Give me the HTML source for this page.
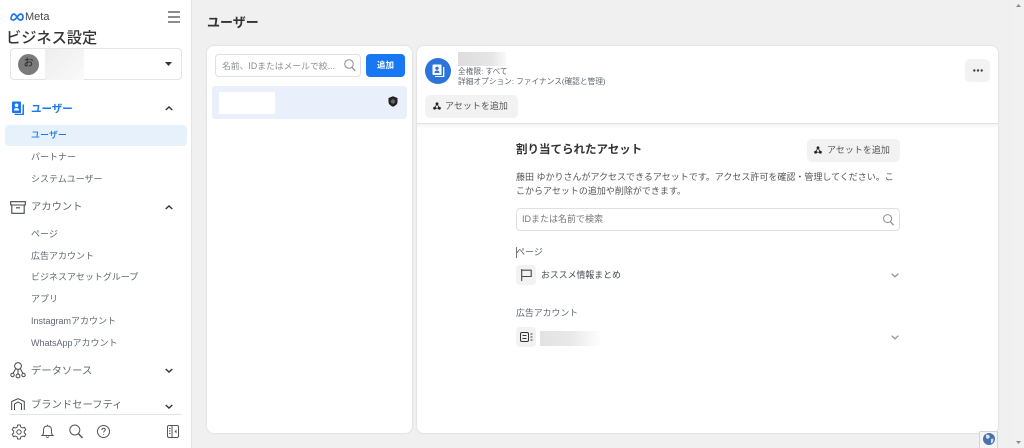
<!DOCTYPE html>
<html lang="ja"><head><meta charset="utf-8"><title>ビジネス設定</title>
<style>
*{box-sizing:border-box}
html,body{margin:0;padding:0}
body{width:1024px;height:448px;overflow:hidden;position:relative;background:#f0f0f0;font-family:"Liberation Sans","Noto Sans CJK JP",sans-serif;color:#444950;filter:blur(.3px)}
.a{position:absolute;white-space:nowrap}
svg{position:absolute;overflow:visible}
.sub{position:absolute;left:31px;font-size:9px;line-height:14px;color:#606770;white-space:nowrap}
.main{position:absolute;left:31px;font-size:10.300px;line-height:16px;color:#606770;white-space:nowrap}
.card{position:absolute;background:#fff;border-radius:7px;box-shadow:0 0 2px rgba(0,0,0,.14)}
.btn{position:absolute;background:#f2f2f2;border-radius:5px}
</style></head><body>

<!-- sidebar -->
<div class="a" style="left:0;top:0;width:192px;height:448px;background:#fff;border-right:1px solid #e4e4e4"></div>
<svg style="left:10px;top:13px" width="14" height="8" viewBox="0 0 14 8"><path d="M1 6C1 3 2.500 1 4 1c2.200 0 3.500 6 6 6 2 0 3-1.200 3-3 0-1.800-1-3-2.500-3C8.300 1 6 7 3.500 7 2 7 1 6.500 1 5.200" fill="none" stroke="#1877f2" stroke-width="1.700"/></svg>
<div class="a" style="left:25px;top:10px;font-size:11px;line-height:15px;color:#444950">Meta</div>
<svg style="left:168px;top:11px" width="12" height="12" viewBox="0 0 12 12"><path d="M0 1h12M0 6h12M0 11h12" stroke="#444950" stroke-width="1.300" fill="none"/></svg>
<div class="a" style="left:6px;top:29px;font-size:15.200px;line-height:20px;color:#333;font-weight:500">ビジネス設定</div>

<div class="a" style="left:10px;top:48px;width:172px;height:32px;border:1.500px solid #e4e4e4;border-radius:4px;background:#fff"></div>
<div class="a" style="left:18px;top:54px;width:21px;height:21px;border-radius:50%;background:#7b7b7b;color:#222;font-size:10px;line-height:20px;text-align:center">お</div>
<div class="a" style="left:45px;top:49px;width:39px;height:31px;background:linear-gradient(135deg,#eee,#f6f6f6 70%,#fafafa)"></div>
<svg style="left:165px;top:62px" width="8" height="5" viewBox="0 0 8 5"><path d="M0 0h7L3.500 4z" fill="#333"/></svg>

<svg style="left:11px;top:101px" width="14" height="15" viewBox="0 0 14 15"><path d="M1 1.500Q1 .5 2 .5h7q1 0 1 1V12H2q-1 0-1-1z" fill="#1877f2"/><path d="M11.500 3.500h1.500V14H3.500v-1.200h8z" fill="#1877f2"/><circle cx="5.500" cy="4.300" r="1.800" fill="#fff"/><path d="M3 9.500q0-2.500 2.500-2.500T8 9.500z" fill="#fff"/></svg>
<div class="a" style="left:31px;top:101px;font-size:10.500px;line-height:16px;color:#1877f2;font-weight:700">ユーザー</div>
<svg style="left:165px;top:106px" width="8" height="5" viewBox="0 0 8 5"><path d="M.7 4L4 1l3.300 3" fill="none" stroke="#333" stroke-width="1.400"/></svg>
<div class="a" style="left:5px;top:125px;width:182px;height:21px;background:#e7f1fc;border-radius:4px"></div>
<div class="sub" style="top:128px;color:#1877f2;font-weight:500">ユーザー</div>
<div class="sub" style="top:150px">パートナー</div>
<div class="sub" style="top:172px">システムユーザー</div>

<svg style="left:10px;top:201px" width="16" height="13" viewBox="0 0 16 13"><path d="M.7.7h14.600v3.300H.7zM1.800 4v8.300h12.400V4M6 6.800h4" fill="none" stroke="#444950" stroke-width="1.100"/></svg>
<div class="main" style="top:200px">アカウント</div>
<svg style="left:165px;top:205px" width="8" height="5" viewBox="0 0 8 5"><path d="M.7 4L4 1l3.300 3" fill="none" stroke="#333" stroke-width="1.400"/></svg>
<div class="sub" style="top:227px">ページ</div>
<div class="sub" style="top:249px">広告アカウント</div>
<div class="sub" style="top:270px">ビジネスアセットグループ</div>
<div class="sub" style="top:292px">アプリ</div>
<div class="sub" style="top:314px">Instagramアカウント</div>
<div class="sub" style="top:336px">WhatsAppアカウント</div>

<svg style="left:10px;top:362px" width="16" height="17" viewBox="0 0 16 17" fill="none" stroke="#444950" stroke-width="1"><circle cx="8" cy="4" r="3.400"/><path d="M5.500 7L3 11.500M10.500 7L13 11.500M8 7.500V12"/><circle cx="2.500" cy="13" r="1.700"/><circle cx="8" cy="14" r="1.900"/><circle cx="13.500" cy="13" r="1.700"/></svg>
<div class="main" style="top:364px">データソース</div>
<svg style="left:165px;top:368px" width="8" height="5" viewBox="0 0 8 5"><path d="M.7 1L4 4l3.300-3" fill="none" stroke="#333" stroke-width="1.400"/></svg>
<svg style="left:11px;top:398px" width="14" height="12" viewBox="0 0 14 12" fill="none" stroke="#444950" stroke-width="1"><path d="M.7 12V3.500L7 .7l6.300 2.800V12M3.500 12V6L7 4l3.500 2v6"/></svg>
<div class="main" style="top:398px">ブランドセーフティ</div>
<svg style="left:165px;top:404px" width="8" height="5" viewBox="0 0 8 5"><path d="M.7 1L4 4l3.300-3" fill="none" stroke="#333" stroke-width="1.400"/></svg>

<div class="a" style="left:0;top:414px;width:191px;height:34px;background:#fff"></div>
<div class="a" style="left:10px;top:414px;width:172px;height:1px;background:#e4e4e4"></div>
<svg style="left:12px;top:424px" width="14" height="15" viewBox="0 0 14 15" fill="none" stroke="#555" stroke-width="1"><path d="M5.600 1h2.800l.4 2 1.800 1 1.900-.7 1.300 2.400-1.500 1.300v2l1.500 1.300-1.300 2.400-1.900-.7-1.800 1-.4 2H5.600l-.4-2-1.800-1-1.900.7L.2 10.300l1.500-1.300V7L.2 5.700l1.300-2.400 1.900.7 1.800-1z"/><circle cx="7" cy="8" r="2.200"/></svg>
<svg style="left:41px;top:424px" width="13" height="15" viewBox="0 0 13 15" fill="none" stroke="#555" stroke-width="1"><path d="M1 11.500q1.500-1 1.500-3.500V6q0-4 4-4t4 4v2q0 2.500 1.500 3.500zM6.500 2V.8M5 12.500q1.500 2 3 0"/></svg>
<svg style="left:69px;top:424px" width="14" height="15" viewBox="0 0 14 15" fill="none" stroke="#555"><circle cx="5.800" cy="6" r="5" stroke-width="1"/><path d="M9.500 9.700l4 4.300" stroke-width="1.500"/></svg>
<svg style="left:97px;top:425px" width="13" height="13" viewBox="0 0 13 13" fill="none" stroke="#555" stroke-width="1"><circle cx="6.500" cy="6.500" r="6"/><path d="M4.800 5q.2-1.700 1.800-1.700 1.700 0 1.700 1.500c0 1.200-1.700 1.300-1.700 2.700M6.600 9v.8"/></svg>
<svg style="left:167px;top:425px" width="12" height="13" viewBox="0 0 12 13" fill="none" stroke="#555" stroke-width="1"><rect x=".5" y=".5" width="11" height="12" rx="1.500"/><path d="M5 .5v12M2 3.500h1.500M2 6h1.500M2 8.500h1.500"/><path d="M9.500 4.500L7.500 6.500l2 2z" fill="#555" stroke="none"/></svg>

<!-- header -->
<div class="a" style="left:207px;top:13px;font-size:13px;line-height:19px;color:#333;font-weight:700">ユーザー</div>

<!-- list card -->
<div class="card" style="left:207px;top:46px;width:205px;height:387px"></div>
<div class="a" style="left:215px;top:54px;width:146px;height:23px;border:1px solid #dfe0e2;border-radius:4px;background:#fff"></div>
<div class="a" style="left:222px;top:59px;font-size:8.800px;line-height:14px;color:#8a8d91">名前、IDまたはメールで絞...</div>
<svg style="left:344px;top:59px" width="12" height="13" viewBox="0 0 12 13" fill="none" stroke="#8a8d91"><circle cx="5" cy="5" r="4.300" stroke-width="1"/><path d="M8 8.300l3.300 3.700" stroke-width="1.200"/></svg>
<div class="a" style="left:366px;top:54px;width:39px;height:23px;background:#1877f2;border-radius:4px;color:#fff;font-size:8.500px;font-weight:700;line-height:22px;text-align:center">追加</div>
<div class="a" style="left:212px;top:86px;width:195px;height:33px;background:#e9f0fb;border-radius:3px"></div>
<div class="a" style="left:219px;top:92px;width:56px;height:22px;background:#fff"></div>
<svg style="left:388px;top:96px" width="10" height="11" viewBox="0 0 10 11"><path d="M5 .3L9.500 2v4q0 3-4.500 4.700Q.5 9 .5 6V2z" fill="#222"/><circle cx="5" cy="5.500" r="2.200" fill="#666"/></svg>

<!-- detail card -->
<div class="card" style="left:417px;top:46px;width:581px;height:387px"></div>
<div class="a" style="left:417px;top:123px;width:581px;height:1px;background:#e2e2e2"></div>
<div class="a" style="left:417px;top:124px;width:581px;height:5px;background:linear-gradient(#f3f3f3,#fff)"></div>
<div class="a" style="left:425px;top:58px;width:26px;height:26px;border-radius:50%;background:#2d74da"></div>
<svg style="left:432px;top:64px" width="13" height="14" viewBox="0 0 13 14"><path d="M.5 1.500Q.5.500 1.500.500h7q1 0 1 1V11H1.500q-1 0-1-1z" fill="#fff"/><path d="M11 3h1.300v10H3v-1h8z" fill="#fff"/><circle cx="5" cy="4.300" r="1.700" fill="#2d74da"/><path d="M2.500 9q0-2.500 2.500-2.500T7.500 9z" fill="#2d74da"/></svg>
<div class="a" style="left:458px;top:52px;width:48px;height:14px;background:linear-gradient(90deg,#ddd,#e6e6e6 70%,#f8f8f8)"></div>
<div class="a" style="left:458px;top:66px;font-size:7.700px;line-height:11px;color:#606770">全権限: すべて</div>
<div class="a" style="left:458px;top:76px;font-size:7.700px;line-height:11px;color:#606770">詳細オプション: ファイナンス(確認と管理)</div>
<div class="btn" style="left:425px;top:95px;width:93px;height:23px"></div>
<svg style="left:433px;top:102px" width="8" height="8" viewBox="0 0 8 8" fill="#222"><path d="M4 1.800L1.600 6.200h4.800z" fill="none" stroke="#222" stroke-width=".8"/><circle cx="4" cy="1.800" r="1.400"/><circle cx="1.600" cy="6.200" r="1.400"/><circle cx="6.400" cy="6.200" r="1.400"/></svg>
<div class="a" style="left:445px;top:99px;font-size:9px;line-height:14px;color:#555">アセットを追加</div>
<div class="btn" style="left:965px;top:59px;width:25px;height:23px"></div>
<svg style="left:973px;top:69px" width="10" height="3" viewBox="0 0 10 3" fill="#444"><circle cx="1.300" cy="1.500" r="1.200"/><circle cx="5" cy="1.500" r="1.200"/><circle cx="8.700" cy="1.500" r="1.200"/></svg>

<div class="a" style="left:516px;top:142px;font-size:11.500px;line-height:17px;color:#333;font-weight:700">割り当てられたアセット</div>
<div class="btn" style="left:807px;top:139px;width:93px;height:23px"></div>
<svg style="left:814px;top:146px" width="8" height="8" viewBox="0 0 8 8" fill="#222"><path d="M4 1.800L1.600 6.200h4.800z" fill="none" stroke="#222" stroke-width=".8"/><circle cx="4" cy="1.800" r="1.400"/><circle cx="1.600" cy="6.200" r="1.400"/><circle cx="6.400" cy="6.200" r="1.400"/></svg>
<div class="a" style="left:827px;top:143px;font-size:9px;line-height:14px;color:#555">アセットを追加</div>
<div class="a" style="left:516px;top:170px;font-size:9px;line-height:14px;color:#555">藤田 ゆかりさんがアクセスできるアセットです。アクセス許可を確認・管理してください。こ</div>
<div class="a" style="left:516px;top:184px;font-size:9px;line-height:14px;color:#555">こからアセットの追加や削除ができます。</div>
<div class="a" style="left:516px;top:208px;width:384px;height:23px;border:1px solid #dfe0e2;border-radius:4px;background:#fff"></div>
<div class="a" style="left:522px;top:212px;font-size:9px;line-height:14px;color:#777">IDまたは名前で検索</div>
<svg style="left:883px;top:214px" width="11" height="12" viewBox="0 0 11 12" fill="none" stroke="#8a8d91"><circle cx="4.600" cy="4.600" r="4" stroke-width="1"/><path d="M7.500 7.700l3 3.500" stroke-width="1.200"/></svg>

<div class="a" style="left:516px;top:245px;font-size:9px;line-height:14px;color:#606770">ページ</div>
<div class="a" style="left:516px;top:247px;width:1px;height:11px;background:#777"></div>
<div class="btn" style="left:516px;top:265px;width:20px;height:20px;border-radius:4px"></div>
<svg style="left:521px;top:269px" width="11" height="12" viewBox="0 0 11 12" fill="none" stroke="#444950" stroke-width="1.100"><path d="M.7 0v12M.7 1.200h9.500v6.300H.7"/></svg>
<div class="a" style="left:541px;top:268px;font-size:8.900px;line-height:14px;color:#444950">おススメ情報まとめ</div>
<svg style="left:891px;top:273px" width="8" height="5" viewBox="0 0 8 5"><path d="M.7 .7L4 3.800 7.300 .7" fill="none" stroke="#8a8d91" stroke-width="1.200"/></svg>

<div class="a" style="left:516px;top:306px;font-size:8.900px;line-height:14px;color:#606770">広告アカウント</div>
<div class="btn" style="left:516px;top:327px;width:20px;height:20px;border-radius:4px"></div>
<svg style="left:520px;top:332px" width="13" height="10" viewBox="0 0 13 10" fill="none" stroke="#333" stroke-width="1"><rect x=".5" y=".5" width="8" height="9" rx="1.500"/><path d="M2.500 3.500h4M2.500 6.500h4M10.500 2h2M10.500 5h2M10.500 8h2"/></svg>
<div class="a" style="left:540px;top:331px;width:62px;height:15px;background:linear-gradient(90deg,#e2e2e2,#e9e9e9 50%,#fff)"></div>
<svg style="left:891px;top:335px" width="8" height="5" viewBox="0 0 8 5"><path d="M.7 .7L4 3.800 7.300 .7" fill="none" stroke="#8a8d91" stroke-width="1.200"/></svg>

<!-- scrollbar hints -->
<div class="a" style="left:1013px;top:0;width:11px;height:448px;background:#f1f1f1"></div>
<svg style="left:1016px;top:4px" width="5" height="3" viewBox="0 0 5 3"><path d="M2.500 0L5 3H0z" fill="#8a8a8a"/></svg>
<svg style="left:1016px;top:441px" width="5" height="3" viewBox="0 0 5 3"><path d="M0 0h5L2.500 3z" fill="#8a8a8a"/></svg>

<!-- globe -->
<div class="a" style="left:979px;top:431px;width:19px;height:17px;background:#f4f5f7;border:1px solid #cfd3dc;border-bottom:0;border-radius:2px 2px 0 0"></div>
<svg style="left:983px;top:433px" width="12" height="12" viewBox="0 0 12 12"><circle cx="6" cy="6" r="6" fill="#4a72ad"/><path d="M3 1.500l3 .5 1 2-2 2-2-1zM8 6l2.500-.5L10 9 8 10.500z" fill="#d9e2ef"/></svg>

</body></html>
